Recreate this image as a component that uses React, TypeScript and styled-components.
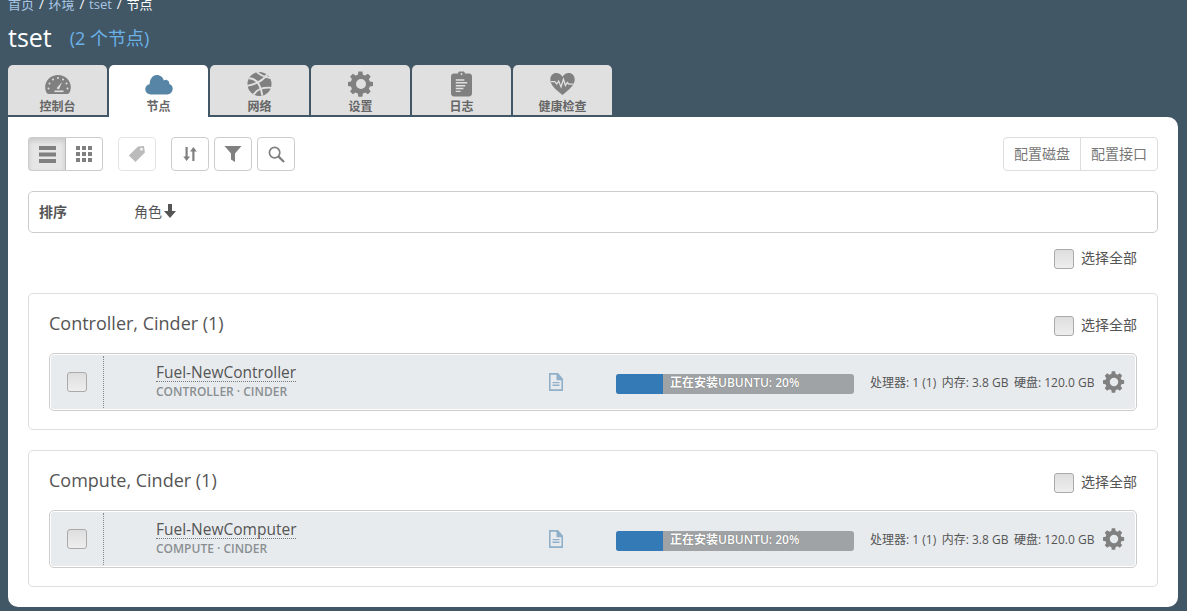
import React from "react";
import styled, { createGlobalStyle } from "styled-components";

const GlobalStyle = createGlobalStyle`
  html, body {
    margin: 0;
    padding: 0;
    height: 611px;
    overflow: hidden;
    background: #415766;
    font-family: "Open Sans", "Noto Sans CJK SC", sans-serif;
    font-size: 14px;
    color: #555;
  }
`;

const Page = styled.div`
  width: 1187px;
  height: 611px;
  padding: 0 9px 4px 8px;
  box-sizing: border-box;
  overflow: hidden;
`;

const Breadcrumb = styled.div`
  height: 22px;
  margin-top: -7px;
  font-size: 13px;
  line-height: 22px;
  word-spacing: 1.500px;
  color: #fff;
  a {
    color: #a8c6e4;
  }
`;

const Title = styled.div`
  display: flex;
  align-items: center;
  height: 44px;
  margin-bottom: 6px;
  font-size: 25px;
  color: #fff;
  span {
    margin-left: 18px;
    font-size: 18px;
    color: #6bb1e6;
  }
`;

const Tabs = styled.div`
  display: flex;
  gap: 2px;
  height: 52px;
`;

const Tab = styled.div<{ $active?: boolean }>`
  width: 99px;
  height: ${(p) => (p.$active ? "52px" : "50px")};
  display: flex;
  flex-direction: column;
  align-items: center;
  box-sizing: border-box;
  padding-top: 6px;
  border-radius: 5px 5px 0 0;
  background: ${(p) => (p.$active ? "#fff" : "#dfe0df")};
  font-size: 12px;
  font-weight: 600;
  line-height: 16px;
  color: #666;
  svg {
    display: block;
    height: 26px;
    margin-bottom: 2px;
  }
`;

const Panel = styled.div`
  height: 490px;
  box-sizing: border-box;
  padding: 20px;
  background: #fff;
  border-radius: 0 10px 10px 10px;
`;

const Toolbar = styled.div`
  display: flex;
  align-items: center;
  height: 34px;
`;

const BtnGroup = styled.div`
  display: flex;
  margin-right: 15px;
`;

const IconBtn = styled.div<{ $active?: boolean; $faded?: boolean; $mr?: number }>`
  width: 38px;
  height: 34px;
  box-sizing: border-box;
  display: flex;
  align-items: center;
  justify-content: center;
  border: 1px solid ${(p) => (p.$faded ? "#e4e4e4" : "#ccc")};
  border-radius: 4px;
  margin-right: ${(p) => p.$mr ?? 0}px;
  background: ${(p) => (p.$active ? "#e6e6e6" : "#fff")};
  box-shadow: ${(p) => (p.$active ? "inset 0 3px 5px rgba(0,0,0,.125)" : "none")};
  ${BtnGroup} &:first-child {
    border-radius: 4px 0 0 4px;
    border-right: 1px solid #bbb;
  }
  ${BtnGroup} &:last-child:not(:first-child) {
    border-radius: 0 4px 4px 0;
    border-left: 0;
    width: 37px;
  }
`;

const Spacer = styled.div`
  flex: 1;
`;

const ConfigGroup = styled.div`
  display: flex;
  height: 34px;
  box-sizing: border-box;
  border: 1px solid #ddd;
  border-radius: 4px;
`;

const ConfigBtn = styled.div`
  width: 76px;
  text-align: center;
  line-height: 32px;
  font-size: 14px;
  color: #777;
  & + & {
    border-left: 1px solid #ddd;
  }
`;

const SortBar = styled.div`
  display: flex;
  align-items: center;
  height: 42px;
  box-sizing: border-box;
  margin-top: 20px;
  padding: 0 0 2px 10px;
  border: 1px solid #ccc;
  border-radius: 5px;
`;

const SortLabel = styled.div`
  width: 95px;
  font-size: 14px;
  font-weight: 600;
  color: #555;
`;

const SortItem = styled.div`
  display: flex;
  align-items: center;
  gap: 2px;
  font-size: 14px;
  color: #555;
`;

const SelectAllRow = styled.label`
  display: flex;
  justify-content: flex-end;
  align-items: flex-start;
  gap: 7px;
  padding-right: 21px;
  font-size: 14px;
  line-height: 18px;
  color: #555;
`;

const TopSelect = styled(SelectAllRow)`
  height: 20px;
  margin-top: 16px;
`;

const Check = styled.div`
  width: 20px;
  height: 20px;
  box-sizing: border-box;
  border: 1px solid #aaa;
  border-radius: 3px;
  background: linear-gradient(#dedede, #eee);
`;

const Group = styled.section<{ $mt: number }>`
  height: 137px;
  box-sizing: border-box;
  margin-top: ${(p) => p.$mt}px;
  padding: 22px 20px 0;
  border: 1px solid #ddd;
  border-radius: 5px;
`;

const GroupHead = styled.div`
  display: flex;
  justify-content: space-between;
  align-items: center;
  height: 20px;
  margin-bottom: 17px;
  h3 {
    margin: 0 0 7px;
    font-size: 18px;
    font-weight: 400;
    color: #555;
  }
  ${SelectAllRow} {
    padding: 0;
  }
`;

const Node = styled.div`
  display: flex;
  align-items: center;
  height: 58px;
  box-sizing: border-box;
  padding: 1px;
  border: 1px solid #ccc;
  border-radius: 5px;
  background: #e8ebee;
  background-clip: content-box;
`;

const NodeCheck = styled.div`
  width: 53px;
  height: 52px;
  box-sizing: border-box;
  padding: 16px 0 0 16px;
  border-right: 1px dotted #888;
`;

const NodeName = styled.div`
  width: 393px;
  margin-left: 52px;
`;

const Name = styled.div`
  display: inline-block;
  margin-top: -2px;
  font-size: 15.500px;
  font-weight: 500;
  line-height: 18px;
  color: #555;
  border-bottom: 1px dotted #777;
`;

const Roles = styled.div`
  font-size: 12px;
  font-weight: 600;
  line-height: 20px;
  color: #8a8f92;
`;

const DocSlot = styled.div`
  width: 67px;
  display: flex;
`;

const Progress = styled.div`
  position: relative;
  width: 238px;
  height: 20px;
  margin-top: 4px;
  border-radius: 3px;
  overflow: hidden;
  background: #a0a3a5;
`;

const ProgressFill = styled.div`
  height: 100%;
  background: #337ab7;
`;

const ProgressLabel = styled.div`
  position: absolute;
  left: 54px;
  top: -1px;
  font-size: 12px;
  font-weight: 600;
  line-height: 20px;
  color: #fff;
  text-shadow: 0 0 1px rgba(0, 0, 0, 0.4);
  white-space: nowrap;
`;

const Stats = styled.div`
  display: flex;
  gap: 5.500px;
  width: 233px;
  margin-left: 16px;
  font-size: 12px;
  color: #555;
  white-space: nowrap;
`;

const G = "#808080";

const GaugeIcon = () => (
  <svg viewBox="0 0 26 26" width="26">
    <path fill={G} d="M13 4C5.800 4 .2 9.500.2 16c0 2 .4 3.600 1 5 .5 1.200 1.300 2 2.500 2h18.600c1.200 0 2-.8 2.500-2 .6-1.400 1-3 1-5C25.800 9.500 20.200 4 13 4z" />
    <g fill="#dfe0df">
      <circle cx="13" cy="7" r="1" />
      <circle cx="8" cy="8.500" r="1" />
      <circle cx="18" cy="8.500" r="1" />
      <circle cx="4.500" cy="12.500" r="1" />
      <circle cx="21.500" cy="12.500" r="1" />
      <circle cx="3.500" cy="17.500" r="1" />
      <circle cx="22.500" cy="17.500" r="1" />
      <path d="M17 11l-3 7.500-2.500-1.300z" />
      <rect x="9.500" y="19.500" width="9" height="1.600" />
    </g>
  </svg>
);

const CloudIcon = () => (
  <svg viewBox="0 0 28 26" width="28">
    <path fill="#5785a6" d="M6 23.500c-3.300 0-5.700-2.300-5.700-5.200 0-2.600 1.800-4.600 4.300-5C4.700 8 7.700 4 11.800 4c3.500 0 6.200 2.300 7 5.400 1-.6 2-.8 3-.5 1.900.6 2.700 2.200 2.500 4.100 2.200.6 3.500 2.400 3.400 4.800-.1 3.300-2.500 5.700-5.500 5.700z" />
  </svg>
);

const GlobeIcon = () => (
  <svg viewBox="0 0 26 26" width="25">
    <circle cx="13" cy="13" r="12.500" fill={G} />
    <g fill="none" stroke="#dfe0df" strokeWidth="2">
      <path d="M2 7c7 0 12 6 14 18" />
      <path d="M10 0c3 4 9 6 16 7" />
      <path d="M21 3c-4 6-10 10-21 12" />
      <path d="M7 24c3-5 10-8 19-7" />
    </g>
  </svg>
);

const GEAR =
  "M448 288v-64l-52-9c-3-13-8-25-15-36l30-43-45-45-43 30c-11-7-23-12-36-15l-9-52h-64l-9 52c-13 3-25 8-36 15l-43-30-45 45 30 43c-7 11-12 23-15 36l-52 9v64l52 9c3 13 8 25 15 36l-30 43 45 45 43-30c11 7 23 12 36 15l9 52h64l9-52c13-3 25-8 36-15l43 30 45-45-30-43c7-11 12-23 15-36zM256 336a80 80 0 1 1 0-160 80 80 0 0 1 0 160z";

const GearIcon = ({ size = 28 }: { size?: number }) => (
  <svg viewBox="48 48 416 416" width={size} height={size}>
    <path fill={G} d={GEAR} />
  </svg>
);

const ClipboardIcon = () => (
  <svg viewBox="0 0 22 26" width="21">
    <path fill={G} d="M3 2h4.500V1.500C7.500.7 8.200 0 9 0h4c.8 0 1.500.7 1.500 1.500V2H19c1.700 0 3 1.300 3 3v18c0 1.700-1.300 3-3 3H3c-1.700 0-3-1.300-3-3V5c0-1.700 1.300-3 3-3z" />
    <circle cx="11" cy="2.500" r="1" fill="#dfe0df" />
    <path fill="#dfe0df" d="M5 8h9v1.500H5zM5 11h12v1.500H5zM5 14h10v1.500H5zM5 17h8v1.500H5zM5 20h5v1.500H5z" />
  </svg>
);

const HeartIcon = () => (
  <svg viewBox="0 0 26 24" width="25">
    <path fill={G} d="M13 23.500C6 17.500.3 13.500.3 7 .3 3.300 3 .5 6.600.5c2.700 0 5 1.500 6.400 4 1.400-2.500 3.700-4 6.400-4C23 .5 25.700 3.300 25.700 7c0 6.500-5.700 10.500-12.700 16.500z" />
    <path fill="none" stroke="#dfe0df" strokeWidth="1.300" d="M1 9.500h4l2 2.500 2-3 2.500 6 2.500-8 2 6.500 2-3 1.500 1.500h5" />
  </svg>
);

const ListIcon = () => (
  <svg viewBox="0 0 17 17" width="17" height="17">
    <path fill="#808080" d="M0 0h17v4H0zM0 6.500h17v4H0zM0 13h17v4H0z" />
  </svg>
);

const GridIcon = () => (
  <svg viewBox="0 0 16 16" width="16" height="16">
    <path fill="#808080" d="M0 0h4v4H0zM6 0h4v4H6zM12 0h4v4h-4zM0 6h4v4H0zM6 6h4v4H6zM12 6h4v4h-4zM0 12h4v4H0zM6 12h4v4H6zM12 12h4v4h-4z" />
  </svg>
);

const TagIcon = () => (
  <svg viewBox="0 0 18 18" width="18" height="18">
    <path fill="#bbb" d="M10 1.500l6-.5.9 6.500L7.500 17 .8 10.500zM13.500 3a1.300 1.300 0 1 0 0 2.600 1.300 1.300 0 0 0 0-2.600z" />
  </svg>
);

const SortIcon = () => (
  <svg viewBox="0 0 14 16" width="14" height="16">
    <path fill={G} d="M2.500 1h2.200v9.500H7L3.600 15 .3 10.500h2.200zM9.300 15h2.200V5.500h2.300L10.400 1 7 5.500h2.300z" />
  </svg>
);

const FilterIcon = () => (
  <svg viewBox="0 0 18 18" width="18" height="18">
    <path fill={G} d="M.5 1h17l-6.500 7.500V17l-4-2.500v-6z" />
  </svg>
);

const SearchIcon = () => (
  <svg viewBox="0 0 18 18" width="17" height="17">
    <circle cx="7" cy="7" r="5.500" fill="none" stroke={G} strokeWidth="1.800" />
    <path stroke={G} strokeWidth="2.400" d="M11 11l6 6" />
  </svg>
);

const DownArrow = () => (
  <svg viewBox="0 0 12 14" width="12" height="14">
    <path fill="#555" d="M4 0h4v7h4l-6 7-6-7h4z" />
  </svg>
);

const DocIcon = () => (
  <svg viewBox="0 0 14 16" width="14" height="18" preserveAspectRatio="none">
    <path fill="#8fb0c8" fillRule="evenodd" d="M0 0h9l5 5v11H0zM1.600 1.600v12.800h10.800V6.500H7.500V1.600zM3.500 8h7v1.200h-7zM3.500 10.300h7v1.200h-7z" />
  </svg>
);

const tabs = [
  { label: "控制台", icon: <GaugeIcon /> },
  { label: "节点", icon: <CloudIcon />, active: true },
  { label: "网络", icon: <GlobeIcon /> },
  { label: "设置", icon: <GearIcon size={26} /> },
  { label: "日志", icon: <ClipboardIcon /> },
  { label: "健康检查", icon: <HeartIcon /> },
];

const groups = [
  { title: "Controller, Cinder (1)", name: "Fuel-NewController", roles: "CONTROLLER · CINDER", mt: 24 },
  { title: "Compute, Cinder (1)", name: "Fuel-NewComputer", roles: "COMPUTE · CINDER", mt: 20 },
];

export default function App() {
  return (
    <Page>
      <GlobalStyle />
      <Breadcrumb>
        <a>首页</a> / <a>环境</a> / <a>tset</a> / 节点
      </Breadcrumb>
      <Title>
        tset<span>(2 个节点)</span>
      </Title>
      <Tabs>
        {tabs.map((t) => (
          <Tab key={t.label} $active={t.active}>
            {t.icon}
            {t.label}
          </Tab>
        ))}
      </Tabs>
      <Panel>
        <Toolbar>
          <BtnGroup>
            <IconBtn $active>
              <ListIcon />
            </IconBtn>
            <IconBtn>
              <GridIcon />
            </IconBtn>
          </BtnGroup>
          <IconBtn $faded $mr={15}>
            <TagIcon />
          </IconBtn>
          <IconBtn $mr={5}>
            <SortIcon />
          </IconBtn>
          <IconBtn $mr={5}>
            <FilterIcon />
          </IconBtn>
          <IconBtn>
            <SearchIcon />
          </IconBtn>
          <Spacer />
          <ConfigGroup>
            <ConfigBtn>配置磁盘</ConfigBtn>
            <ConfigBtn>配置接口</ConfigBtn>
          </ConfigGroup>
        </Toolbar>
        <SortBar>
          <SortLabel>排序</SortLabel>
          <SortItem>
            角色
            <DownArrow />
          </SortItem>
        </SortBar>
        <TopSelect>
          <Check />
          选择全部
        </TopSelect>
        {groups.map((g) => (
          <Group key={g.name} $mt={g.mt}>
            <GroupHead>
              <h3>{g.title}</h3>
              <SelectAllRow>
                <Check />
                选择全部
              </SelectAllRow>
            </GroupHead>
            <Node>
              <NodeCheck>
                <Check />
              </NodeCheck>
              <NodeName>
                <Name>{g.name}</Name>
                <Roles>{g.roles}</Roles>
              </NodeName>
              <DocSlot>
                <DocIcon />
              </DocSlot>
              <Progress>
                <ProgressFill style={{ width: "47px" }} />
                <ProgressLabel>正在安装UBUNTU: 20%</ProgressLabel>
              </Progress>
              <Stats>
                <span>处理器: 1 (1)</span>
                <span>内存: 3.8 GB</span>
                <span>硬盘: 120.0 GB</span>
              </Stats>
              <GearIcon size={22} />
            </Node>
          </Group>
        ))}
      </Panel>
    </Page>
  );
}
